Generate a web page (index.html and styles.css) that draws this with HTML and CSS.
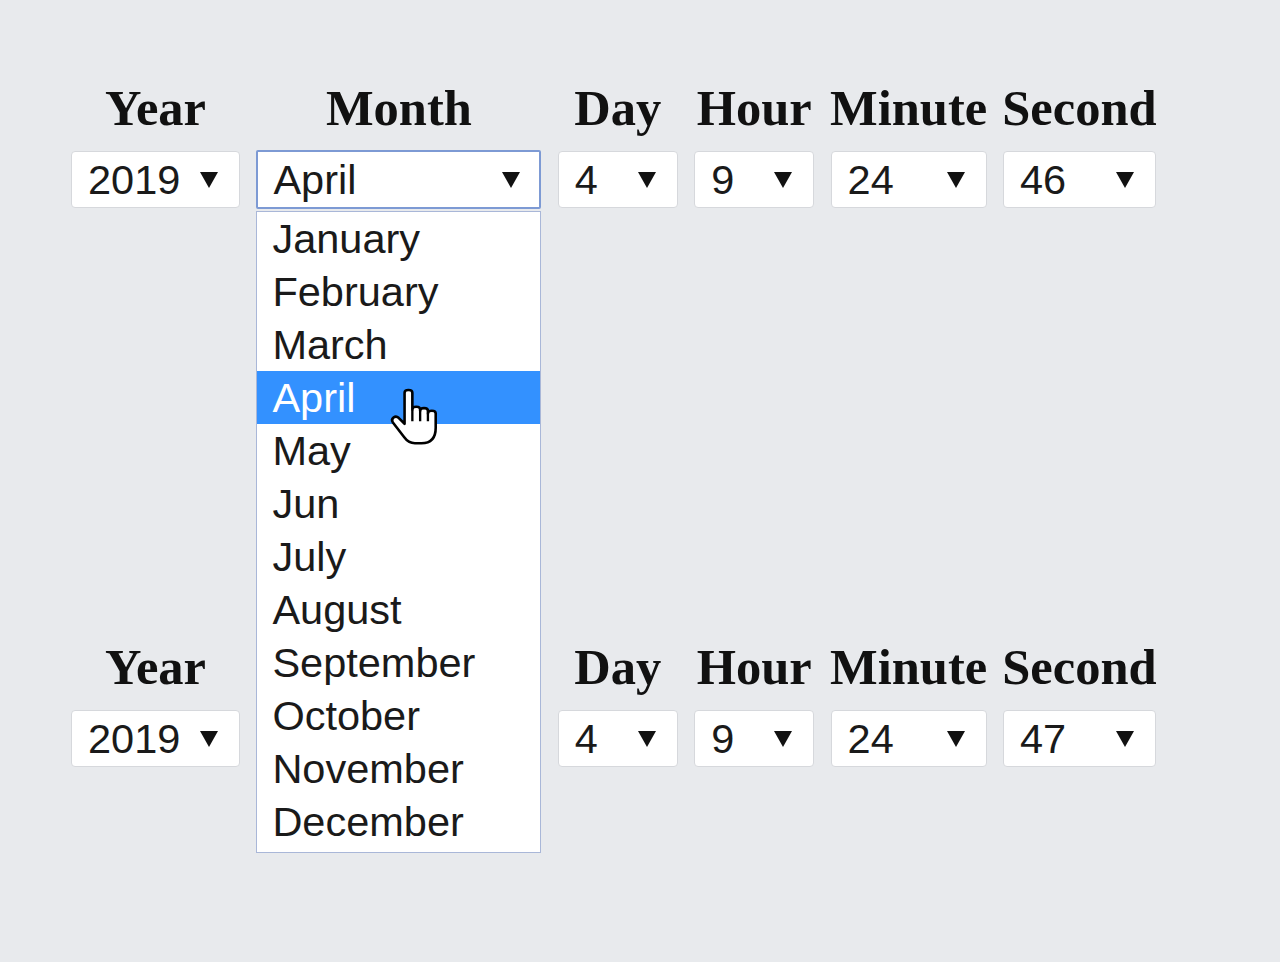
FILE: index.html
```html
<!DOCTYPE html>
<html>
<head>
<meta charset="utf-8">
<link rel="stylesheet" href="styles.css">
</head>
<body>
<div class="page">
  <div class="block">
    <div class="col w-year"><div class="label">Year</div><div class="sel"><span>2019</span><svg class="arr" viewBox="0 0 18 16"><polygon points="0,0 18,0 9,16"/></svg></div></div>
    <div class="col w-month month-col"><div class="label">Month</div><div class="sel sel-focus"><span>April</span><svg class="arr" viewBox="0 0 18 16"><polygon points="0,0 18,0 9,16"/></svg></div>
      <ul class="listbox">
        <li>January</li><li>February</li><li>March</li><li class="hl">April</li><li>May</li><li>Jun</li><li>July</li><li>August</li><li>September</li><li>October</li><li>November</li><li>December</li>
      </ul>
    </div>
    <div class="col w-day"><div class="label">Day</div><div class="sel"><span>4</span><svg class="arr" viewBox="0 0 18 16"><polygon points="0,0 18,0 9,16"/></svg></div></div>
    <div class="col w-hour"><div class="label">Hour</div><div class="sel"><span>9</span><svg class="arr" viewBox="0 0 18 16"><polygon points="0,0 18,0 9,16"/></svg></div></div>
    <div class="col w-min"><div class="label">Minute</div><div class="sel"><span>24</span><svg class="arr" viewBox="0 0 18 16"><polygon points="0,0 18,0 9,16"/></svg></div></div>
    <div class="col w-sec"><div class="label">Second</div><div class="sel"><span>46</span><svg class="arr" viewBox="0 0 18 16"><polygon points="0,0 18,0 9,16"/></svg></div></div>
  </div>
  <div class="block block-2">
    <div class="col w-year"><div class="label">Year</div><div class="sel"><span>2019</span><svg class="arr" viewBox="0 0 18 16"><polygon points="0,0 18,0 9,16"/></svg></div></div>
    <div class="col w-month"></div>
    <div class="col w-day"><div class="label">Day</div><div class="sel"><span>4</span><svg class="arr" viewBox="0 0 18 16"><polygon points="0,0 18,0 9,16"/></svg></div></div>
    <div class="col w-hour"><div class="label">Hour</div><div class="sel"><span>9</span><svg class="arr" viewBox="0 0 18 16"><polygon points="0,0 18,0 9,16"/></svg></div></div>
    <div class="col w-min"><div class="label">Minute</div><div class="sel"><span>24</span><svg class="arr" viewBox="0 0 18 16"><polygon points="0,0 18,0 9,16"/></svg></div></div>
    <div class="col w-sec"><div class="label">Second</div><div class="sel"><span>47</span><svg class="arr" viewBox="0 0 18 16"><polygon points="0,0 18,0 9,16"/></svg></div></div>
  </div>
  <svg class="cursor" viewBox="0 0 18.5 23">
    <path d="M6 2.5 C6 1.1 9 1.1 9 2.5 L9 9 C9 7.6 12 7.6 12 9 L12 9.5 C12 8.1 15 8.1 15 9.5 L15 10.5 C15 9.1 18 9.1 18 10.5 L18 16 C18 20 16 22 12.5 22 L10 22 C8 22 6.8 21 5.8 19.6 L1.5 14 C0.5 12.6 2.4 11 3.7 12.2 L6 14.5 Z" fill="#fff" stroke="#000" stroke-width="1" stroke-linejoin="round"/>
    <path d="M9 9 V13.5 M12 9.5 V13.5 M15 10.5 V13.5" stroke="#000" stroke-width="0.9" fill="none"/>
  </svg>
</div>
</body>
</html>
```

FILE: styles.css
```css
html, body {
  margin: 0;
  padding: 0;
  background: #e8eaed;
}
.page {
  position: relative;
  height: 962px;
  padding: 80px 0 0 71px;
  box-sizing: border-box;
}
.block {
  display: flex;
  gap: 16.4px;
}
.block-2 {
  margin-top: 430px;
}
.col {
  display: flex;
  flex-direction: column;
  align-items: center;
}
.month-col {
  position: relative;
}
.w-year { width: 169px; }
.w-month { width: 285px; }
.w-day { width: 120px; }
.w-hour { width: 120px; }
.w-min { width: 156px; }
.w-sec { width: 153px; }
.label {
  font-family: "Liberation Serif", "Times New Roman", serif;
  font-weight: bold;
  font-size: 50.5px;
  line-height: 56px;
  height: 56px;
  margin-bottom: 15px;
  color: #111;
  white-space: nowrap;
}
.sel {
  width: 100%;
  height: 57px;
  box-sizing: border-box;
  background: #fff;
  border: 1px solid #d6d8dc;
  border-radius: 4px;
  display: flex;
  align-items: center;
  justify-content: space-between;
  padding: 0 21px 0 16px;
  font-family: "Liberation Sans", Arial, sans-serif;
  font-size: 41.5px;
  color: #1a1a1a;
}
.sel-focus {
  height: 59px;
  margin-top: -1px;
  border: 2px solid #7d9ad4;
  border-radius: 2px;
  padding: 0 19px 0 15px;
}
.arr {
  width: 18px;
  height: 16px;
  fill: #111;
  flex: none;
}
.listbox {
  position: absolute;
  z-index: 5;
  left: 0;
  top: 131px;
  width: 285px;
  margin: 0;
  padding: 0 0 4px;
  list-style: none;
  background: #fff;
  border: 1px solid #a9b7d8;
  box-sizing: border-box;
  font-family: "Liberation Sans", Arial, sans-serif;
  font-size: 41.5px;
  color: #1a1a1a;
}
.listbox li {
  height: 53px;
  line-height: 53px;
  padding-left: 15px;
}
.listbox li.hl {
  background: #3391ff;
  color: #fff;
}
.cursor {
  position: absolute;
  z-index: 10;
  left: 389px;
  top: 386px;
  width: 48px;
  height: 60px;
}
```
